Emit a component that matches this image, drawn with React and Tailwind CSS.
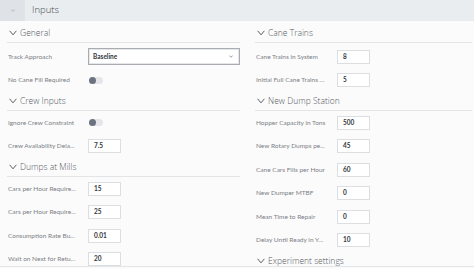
import React from "react";

const font = { fontFamily: "Lato, 'Open Sans', sans-serif" };
const headFont = { fontFamily: "'Open Sans', Lato, sans-serif" };

function Chevron() {
  return (
    <svg width="8" height="6" viewBox="0 0 8 6" className="mr-[2px]">
      <polyline points="0.6,0.8 4,4.8 7.4,0.8" fill="none" stroke="#4a4f55" strokeWidth="0.9" />
    </svg>
  );
}

function Header({ title }) {
  return (
    <div className="h-[19px] flex items-end pb-[3px] border-b border-[#e3e5e7]">
      <div className="flex items-center gap-[1px] pl-[2px]">
        <Chevron />
        <span className="text-[8.5px] leading-[12px] text-[#55595f] font-light" style={headFont}>{title}</span>
      </div>
    </div>
  );
}

function Row({ label, children, labelW }) {
  return (
    <div className="h-[23.5px] flex items-center">
      <div className={`${labelW} shrink-0 pl-[1px] text-[6.5px] text-[#7b8086] whitespace-nowrap`}>{label}</div>
      {children}
    </div>
  );
}

function Input({ value }) {
  return (
    <div className="w-[33px] h-[14px] border border-[#dcdfe2] bg-white flex items-center pl-[5px] text-[6.5px] font-bold text-[#33363a]">
      {value}
    </div>
  );
}

function Toggle() {
  return (
    <div className="ml-[1px] w-[14px] h-[7px] rounded-full bg-[#e4e6ea] flex items-center">
      <div className="w-[7px] h-[7px] rounded-full bg-[#6d7280]" />
    </div>
  );
}

function Select() {
  return (
    <div className="flex-1 h-[17px] border border-[#a9adb2] shadow-[inset_0_0_0_1px_#e4e6e9] bg-white flex items-center justify-between pl-[4px] pr-[6px]">
      <span className="text-[6.5px] font-bold text-[#33363a]">Baseline</span>
      <svg width="4" height="3" viewBox="0 0 4 3">
        <polyline points="0.3,0.5 2,2.3 3.7,0.5" fill="none" stroke="#777" strokeWidth="0.7" />
      </svg>
    </div>
  );
}

export default function App() {
  const L = "w-[81px]";
  const R = "w-[82px]";
  return (
    <div className="relative w-[474px] h-[269px] overflow-hidden bg-[#fbfbfb]" style={font}>
      <div className="h-[21px] flex bg-[#e9edf0]">
        <div className="w-[25px] bg-[#dfe3e7] flex items-center justify-center">
          <svg width="4" height="3" viewBox="0 0 4 3">
            <polyline points="0.3,0.5 2,2.3 3.7,0.5" fill="none" stroke="#9aa0a5" strokeWidth="0.6" />
          </svg>
        </div>
        <div className="flex items-center pl-[7px] text-[9.5px] text-[#43484e] font-light" style={headFont}>Inputs</div>
      </div>
      <div className="flex pl-[7px] pr-[2px] pt-[3px] gap-[15px]">
        <div className="w-[233px] shrink-0">
          <Header title="General" />
          <div className="pt-[2px]">
            <Row label="Track Approach" labelW={L}><Select /></Row>
            <Row label="No Cane Fill Required" labelW={L}><Toggle /></Row>
          </div>
          <Header title="Crew Inputs" />
          <Row label="Ignore Crew Constraint" labelW={L}><Toggle /></Row>
          <Row label="Crew Availability Dela..." labelW={L}><Input value="7.5" /></Row>
          <Header title="Dumps at Mills" />
          <Row label="Cars per Hour Require..." labelW={L}><Input value="15" /></Row>
          <Row label="Cars per Hour Require..." labelW={L}><Input value="25" /></Row>
          <Row label="Consumption Rate Bu..." labelW={L}><Input value="0.01" /></Row>
          <Row label="Wait on Next for Retu..." labelW={L}><Input value="20" /></Row>
        </div>
        <div className="flex-1">
          <Header title="Cane Trains" />
          <div className="pt-[2px]">
            <Row label="Cane Trains in System" labelW={R}><Input value="8" /></Row>
            <Row label="Initial Full Cane Trains ..." labelW={R}><Input value="5" /></Row>
          </div>
          <Header title="New Dump Station" />
          <Row label="Hopper Capacity in Tons" labelW={R}><Input value="500" /></Row>
          <Row label="New Rotary Dumps pe..." labelW={R}><Input value="45" /></Row>
          <Row label="Cane Cars Fills per Hour" labelW={R}><Input value="60" /></Row>
          <Row label="New Dumper MTBF" labelW={R}><Input value="0" /></Row>
          <Row label="Mean Time to Repair" labelW={R}><Input value="0" /></Row>
          <Row label="Delay Until Ready in Y..." labelW={R}><Input value="10" /></Row>
          <Header title="Experiment settings" />
        </div>
      </div>
      <div className="absolute left-0 right-0 top-[266px] h-px bg-[#e3e5e7]" />
    </div>
  );
}
